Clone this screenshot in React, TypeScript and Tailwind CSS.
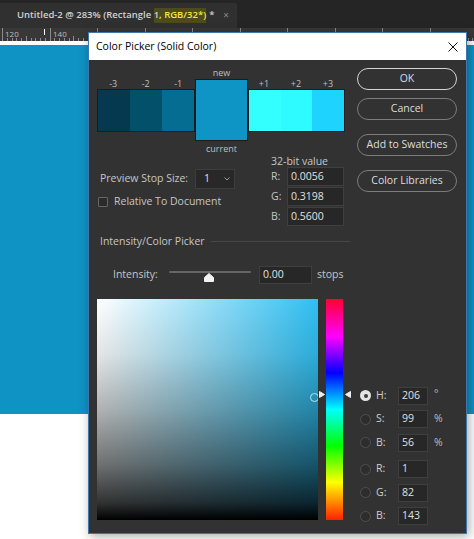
import React from 'react';

const leftSwatches = ['#04394f', '#03506b', '#056d92'];
const rightSwatches = ['#33ffff', '#2dfbff', '#1fd3ff'];

function Ruler() {
  const ticks = [];
  const labels = [];
  for (let i = 0; i < 100; i++) {
    const x = Math.round(2 + i * 4.75) + 0.5;
    const major = i % 10 === 0;
    const mid = i % 5 === 0;
    ticks.push(
      <line key={i} x1={x} x2={x} y1={major ? 0 : mid ? 8 : 10} y2={13} stroke="#8c8c8c" strokeWidth={1} />
    );
    if (major) {
      labels.push(
        <text key={'l' + i} x={x + 2.5} y={9} fontSize={8} fill="#bdbdbd" fontFamily="Open Sans, sans-serif">
          {120 + (i / 10) * 20}
        </text>
      );
    }
  }
  return (
    <svg width={474} height={13} className="block bg-[#383838]">
      {ticks}
      {labels}
      <line x1={44.5} x2={44.5} y1={1} y2={7} stroke="#ffffff" strokeWidth={1} />
    </svg>
  );
}

function Pill({ label, primary }: { label: string; primary?: boolean }) {
  return (
    <div
      className={`h-[22px] w-[100px] rounded-full border flex items-center justify-center text-[10.5px] text-[#dedede] ${
        primary ? 'border-[#d4d4d4]' : 'border-[#7c7c7c]'
      }`}
    >
      {label}
    </div>
  );
}

function Field({ value, w }: { value: string; w: string }) {
  return (
    <div className={`${w} h-[19px] bg-[#272727] border border-[#3f3f3f] flex items-center pl-[3px] text-[10.5px] text-[#e0e0e0]`}>
      {value}
    </div>
  );
}

function Radio({ on }: { on?: boolean }) {
  return on ? (
    <div className="w-[11px] h-[11px] rounded-full bg-[#e4e4e4] flex items-center justify-center">
      <div className="w-[4px] h-[4px] rounded-full bg-[#3a3a3a]" />
    </div>
  ) : (
    <div className="w-[11px] h-[11px] rounded-full border border-[#505050] bg-[#2d2d2d]" />
  );
}

function ValueRow({ label, value, unit, on }: { label: string; value: string; unit?: string; on?: boolean }) {
  return (
    <div className="h-[23.5px] flex items-center">
      <Radio on={on} />
      <span className="ml-[5px] w-[22px] text-[10.5px] text-[#cfcfcf]">{label}</span>
      <div className="w-[30px] h-[18px] bg-[#272727] border border-[#3f3f3f] flex items-center pl-[3px] text-[10.5px] text-[#e0e0e0]">
        {value}
      </div>
      {unit && (
        <span className={`ml-[6px] text-[10.5px] text-[#bdbdbd] ${unit === '°' ? '-mt-[4px]' : ''}`}>{unit}</span>
      )}
    </div>
  );
}

export default function App() {
  return (
    <div className="relative w-[474px] h-[539px] overflow-hidden bg-white font-['Open_Sans',sans-serif]">
      {/* document tab bar */}
      <div className="h-[28px] bg-[#252525] flex items-end">
        <div className="h-[25px] w-[237px] bg-[#303030] flex items-center pl-[17px] text-[9.5px] font-semibold text-[#d0d0d0] whitespace-pre">
          <span>Untitled-2 @ 283% (Rectangle </span>
          <span className="bg-[#4d4a1c] text-[#f2e64a]">
            <span className="text-[#d0d0d0]">1</span>, RGB/32*)
          </span>
          <span className="ml-[3px]">*</span>
          <span className="ml-[9px] text-[#8a8a8a] text-[10px] font-normal">×</span>
        </div>
      </div>
      <Ruler />
      <div className="h-[4px] bg-white" />
      <div className="h-[369px] bg-[#0f93c5]" />

      {/* Color Picker dialog */}
      <div className="absolute left-[88px] top-[32px] w-[379px] h-[502px] border border-[#3c77ae] bg-[#323232] shadow-[2px_2px_10px_rgba(0,0,0,0.35)] flex flex-col">
        <div className="h-[27px] shrink-0 bg-white flex items-center justify-between pl-[7px] pr-[8px] text-[10.5px] text-black">
          <span>Color Picker (Solid Color)</span>
          <svg width={10} height={10} viewBox="0 0 10 10">
            <path d="M0.5 0.5 L9.5 9.5 M9.5 0.5 L0.5 9.5" stroke="#111" strokeWidth={1} />
          </svg>
        </div>

        <div className="flex-1 pl-[8px] pt-[8px] flex flex-col">
          {/* top: swatches, options, buttons */}
          <div className="flex items-start">
            <div className="w-[247px] flex flex-col">
              <div className="flex items-start text-[9px] text-[#bfbfbf] leading-[10px]">
                <div className="mt-[11px] flex flex-col">
                  <div className="flex h-[10px]">
                    {['-3', '-2', '-1'].map((l) => (
                      <span key={l} className="w-[32.5px] text-center">{l}</span>
                    ))}
                  </div>
                  <div className="flex h-[43px] border border-[#1c1c1c]">
                    {leftSwatches.map((c) => (
                      <div key={c} className="flex-1 w-[32px]" style={{ backgroundColor: c }} />
                    ))}
                  </div>
                </div>
                <div className="flex flex-col items-center w-[53px]">
                  <span className="h-[11px] leading-[9px]">new</span>
                  <div className="w-[53px] h-[62px] bg-[#0e95c6] border border-[#1c1c1c]" />
                  <span className="mt-[2px] h-[12px] leading-[12px]">current</span>
                </div>
                <div className="mt-[11px] flex flex-col">
                  <div className="flex h-[10px]">
                    {['+1', '+2', '+3'].map((l) => (
                      <span key={l} className="w-[32px] text-center">{l}</span>
                    ))}
                  </div>
                  <div className="flex h-[43px] border border-[#1c1c1c]">
                    {rightSwatches.map((c) => (
                      <div key={c} className="w-[31.5px]" style={{ backgroundColor: c }} />
                    ))}
                  </div>
                </div>
              </div>

              <div className="flex text-[10.5px] text-[#c6c6c6]">
                <div className="w-[174px] pt-[14px] flex flex-col">
                  <div className="flex items-center h-[20px]">
                    <span className="w-[98px] pl-[3px]">Preview Stop Size:</span>
                    <div className="w-[40px] h-[20px] bg-[#282828] border border-[#3d3d3d] flex items-center justify-between pl-[8px] pr-[4px] text-[#e0e0e0]">
                      <span>1</span>
                      <svg width={6} height={4} viewBox="0 0 6 4">
                        <path d="M0.5 0.5 L3 3 L5.5 0.5" stroke="#9a9a9a" fill="none" strokeWidth={1} />
                      </svg>
                    </div>
                  </div>
                  <div className="flex items-center h-[10px] mt-[8px]">
                    <div className="w-[10px] h-[10px] ml-[1px] border border-[#666] bg-[#2b2b2b] rounded-[1px]" />
                    <span className="ml-[6px]">Relative To Document</span>
                  </div>
                </div>
                <div className="w-[73px] flex flex-col">
                  <span className="h-[12px] leading-[12px]">32-bit value</span>
                  {[
                    ['R:', '0.0056'],
                    ['G:', '0.3198'],
                    ['B:', '0.5600'],
                  ].map(([l, v]) => (
                    <div key={l} className="h-[20px] flex items-start">
                      <span className="w-[16px] leading-[19px]">{l}</span>
                      <Field value={v} w="w-[57px]" />
                    </div>
                  ))}
                </div>
              </div>
            </div>

            <div className="ml-[13px] flex flex-col">
              <Pill label="OK" primary />
              <div className="mt-[7.5px]">
                <Pill label="Cancel" />
              </div>
              <div className="mt-[14.5px]">
                <Pill label="Add to Swatches" />
              </div>
              <div className="mt-[14px]">
                <Pill label="Color Libraries" />
              </div>
            </div>
          </div>

          {/* section header */}
          <div className="mt-[8px] h-[13px] flex items-center pl-[3px] w-[253px] text-[10.5px] text-[#c6c6c6]">
            <span className="leading-[13px] whitespace-nowrap">Intensity/Color Picker</span>
            <div className="ml-[6px] flex-1 h-px bg-[#474747]" />
          </div>

          {/* intensity */}
          <div className="mt-[18px] h-[18px] flex items-center text-[10.5px] text-[#c6c6c6]">
            <span className="w-[72px] pl-[16px]">Intensity:</span>
            <div className="relative w-[82px] h-[18px]">
              <div className="absolute left-0 right-0 top-[5px] h-[2px] rounded-full bg-[#666]" />
              <svg className="absolute left-[35px] top-[7px]" width={10} height={9} viewBox="0 0 10 9">
                <path d="M5 0.5 L9.5 4.5 L9.5 8.5 L0.5 8.5 L0.5 4.5 Z" fill="#f2f2f2" stroke="#f2f2f2" strokeLinejoin="round" />
              </svg>
            </div>
            <div className="ml-[8px] w-[53px] h-[18px] bg-[#272727] border border-[#3f3f3f] flex items-center pl-[3px] text-[#e0e0e0]">
              0.00
            </div>
            <span className="ml-[5px]">stops</span>
          </div>

          {/* picker */}
          <div className="mt-[15px] flex items-start">
            <div className="relative w-[221px] h-[221px] overflow-hidden bg-[linear-gradient(to_right,#ffffff,#2fbff2)]">
              <div className="absolute inset-0 bg-[linear-gradient(to_bottom,rgba(0,0,0,0)_0%,rgba(0,0,0,0.1)_25%,rgba(0,0,0,0.3)_50%,rgba(0,0,0,0.56)_75%,rgba(0,0,0,0.8)_92%,#000_100%)]" />
              <div className="absolute left-[213px] top-[94px] w-[9px] h-[9px] rounded-full border-[1.5px] border-[#b7e4f6]" />
            </div>
            <div className="relative ml-[8px] w-[17px] h-[221px] bg-[linear-gradient(to_bottom,#ff0030_0%,#ff00ff_17%,#0000ff_33.5%,#00ffff_50%,#00ff00_66.5%,#ffff00_83%,#ff2000_100%)]">
              <svg className="absolute -left-[7px] top-[92px]" width={6} height={7} viewBox="0 0 6 7">
                <path d="M0.5 0.5 L5.5 3.5 L0.5 6.5 Z" fill="#eeeeee" stroke="#eeeeee" strokeLinejoin="round" />
              </svg>
              <svg className="absolute -right-[8px] top-[92px]" width={6} height={7} viewBox="0 0 6 7">
                <path d="M5.5 0.5 L0.5 3.5 L5.5 6.5 Z" fill="#eeeeee" stroke="#eeeeee" strokeLinejoin="round" />
              </svg>
            </div>
            <div className="ml-[17px] pt-[85px] flex flex-col">
              <ValueRow label="H:" value="206" unit="°" on />
              <ValueRow label="S:" value="99" unit="%" />
              <ValueRow label="B:" value="56" unit="%" />
              <div className="h-[3px]" />
              <ValueRow label="R:" value="1" />
              <ValueRow label="G:" value="82" />
              <ValueRow label="B:" value="143" />
            </div>
          </div>
        </div>
      </div>
    </div>
  );
}
